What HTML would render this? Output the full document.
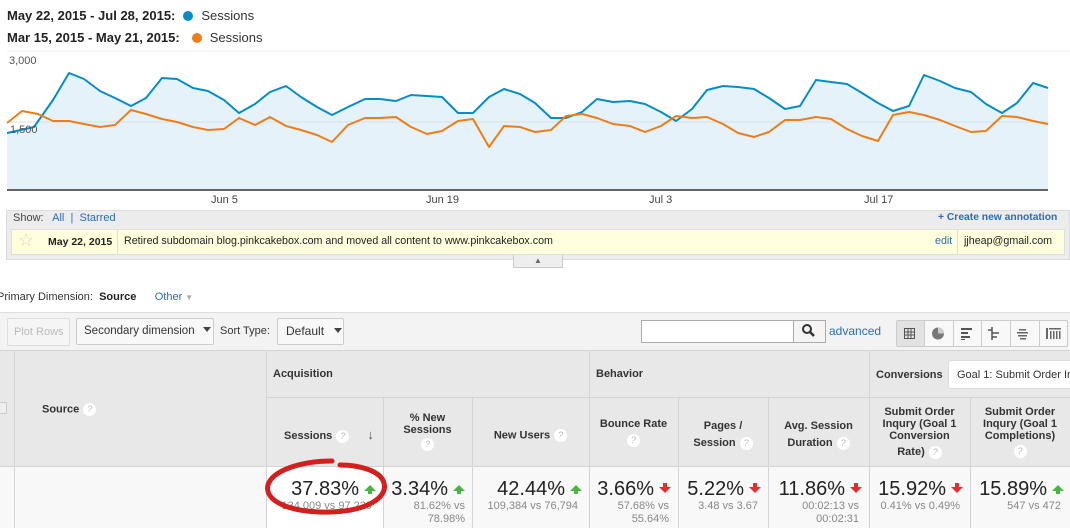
<!DOCTYPE html>
<html><head><meta charset="utf-8"><style>
*{margin:0;padding:0;box-sizing:border-box}
body{width:1070px;height:528px;overflow:hidden;background:#fff;font-family:"Liberation Sans",Arial,sans-serif;color:#222;position:relative}
.a{position:absolute;white-space:nowrap}
.lg{font-size:13px;font-weight:bold;color:#222}
.lg span{font-weight:normal;color:#333}
.dot{display:inline-block;width:10px;height:10px;border-radius:50%;margin:0 8px 0 8px;vertical-align:-1px}
.xl{font-size:11px;color:#444}
.btn{position:absolute;border:1px solid #ccc;border-radius:2px;background:#f8f8f8;font-size:12px;color:#333;padding-left:8px;line-height:25px;white-space:nowrap}
.caret{display:inline-block;border-left:4px solid transparent;border-right:4px solid transparent;border-top:5px solid #444;vertical-align:2px;margin-left:10px}
.vl{position:absolute;width:1px;background:#d4d4d4}
.hh{position:absolute;font-size:11px;font-weight:bold;color:#333;text-align:center;line-height:12px}
.q{display:inline-block;width:13px;height:13px;border-radius:50%;background:#fff;color:#bbb;font-size:9px;line-height:13px;text-align:center;font-weight:normal;vertical-align:middle;margin-left:4px}
.big{position:absolute;font-size:20px;color:#222;text-align:right}
.sm{position:absolute;font-size:11px;color:#888;text-align:right;line-height:13px}
.up{display:inline-block;width:0;height:0;border-left:6px solid transparent;border-right:6px solid transparent;border-bottom:6px solid #4ab344;position:relative;margin-left:5px;vertical-align:4px}
.up:after{content:"";position:absolute;left:-2px;top:5px;width:4px;height:4px;background:#4ab344}
.dn{display:inline-block;width:0;height:0;border-left:6px solid transparent;border-right:6px solid transparent;border-top:6px solid #e52d2d;position:relative;margin-left:5px;vertical-align:2px}
.dn:after{content:"";position:absolute;left:-2px;top:-10px;width:4px;height:5px;background:#e52d2d}
</style></head><body>

<div class="a lg" style="left:7px;top:8px">May 22, 2015 - Jul 28, 2015:<i class="dot" style="background:#058dc7"></i><span>Sessions</span></div>
<div class="a lg" style="left:7px;top:30px">Mar 15, 2015 - May 21, 2015:<i class="dot" style="background:#ed7e17;margin-left:12px"></i><span>Sessions</span></div>

<svg class="a" style="left:0;top:0" width="1070" height="210">
<line x1="7" y1="51" x2="1070" y2="51" stroke="#eee"/>
<polygon fill="#e6f2f9" points="7,190 7,133 34,127 53,100 69,73 84,79 100,91 115,98 131,106 146,98 162,78 177,79 193,88 208,91 224,100 239,113 255,104 270,92 286,86 301,97 317,107 332,115 348,107 365,99 380,99 396,101 411,95 427,96 442,97 458,113 473,113 489,97 504,89 520,94 535,103 551,118 566,118 582,112 597,99 613,102 630,101 645,104 661,112 676,121 692,109 707,90 723,86 738,87 754,89 769,98 785,109 800,106 816,80 831,82 847,84 862,93 878,103 893,111 909,106 924,75 940,81 955,88 971,92 986,104 1002,113 1017,103 1033,83 1048,88 1048,190"/>
<line x1="7" y1="122" x2="1048" y2="122" stroke="#d8e2e6"/>
<polyline fill="none" stroke="#058dc7" stroke-width="2" stroke-linejoin="round" points="7,133 34,127 53,100 69,73 84,79 100,91 115,98 131,106 146,98 162,78 177,79 193,88 208,91 224,100 239,113 255,104 270,92 286,86 301,97 317,107 332,115 348,107 365,99 380,99 396,101 411,95 427,96 442,97 458,113 473,113 489,97 504,89 520,94 535,103 551,118 566,118 582,112 597,99 613,102 630,101 645,104 661,112 676,121 692,109 707,90 723,86 738,87 754,89 769,98 785,109 800,106 816,80 831,82 847,84 862,93 878,103 893,111 909,106 924,75 940,81 955,88 971,92 986,104 1002,113 1017,103 1033,83 1048,88"/>
<polyline fill="none" stroke="#ed7e17" stroke-width="2" stroke-linejoin="round" points="7,123 22,111 38,114 53,121 69,121 84,124 100,127 115,125 131,110 146,114 162,119 177,122 193,127 208,130 224,129 239,118 255,125 270,117 286,126 301,130 317,135 332,142 348,125 365,118 380,118 396,117 411,127 427,134 442,131 458,121 473,119 489,147 504,126 520,127 535,132 551,130 566,116 582,114 597,118 613,124 630,126 645,132 661,126 676,116 692,118 707,117 723,124 738,133 754,137 769,132 785,120 800,120 816,117 831,119 847,129 862,136 878,141 893,115 909,112 924,115 940,120 955,126 971,132 986,131 1002,116 1017,117 1033,121 1048,124"/>
<line x1="7" y1="190" x2="1048" y2="190" stroke="#333" stroke-width="1.5"/>
<text x="9" y="64" font-size="11" fill="#555" font-family="Liberation Sans">3,000</text>
<text x="10" y="133" font-size="11" fill="#555" font-family="Liberation Sans">1,500</text>
</svg>
<div class="a xl" style="left:211px;top:194px">Jun 5</div>
<div class="a xl" style="left:426px;top:194px">Jun 19</div>
<div class="a xl" style="left:649px;top:194px">Jul 3</div>
<div class="a xl" style="left:864px;top:194px">Jul 17</div>

<!-- annotation -->
<div class="a" style="left:6px;top:210px;width:1064px;height:50px;background:#ececec;border:1px solid #ddd"></div>
<div class="a" style="left:13px;top:212px;font-size:11px;color:#444">Show:&nbsp;&nbsp; <span style="color:#2a6db8">All</span> &nbsp;<span style="color:#2a6db8">|</span>&nbsp; <span style="color:#2a6db8">Starred</span></div>
<div class="a" style="left:938px;top:212px;font-size:10.3px;font-weight:bold;color:#2a6db8">+ Create new annotation</div>
<div class="a" style="left:11px;top:229px;width:1054px;height:26px;background:#ffffdf;border:1px solid #ddd"></div>
<div class="a" style="left:18px;top:230px;font-size:18px;color:#d8d8b0">☆</div>
<div class="a" style="left:48px;top:236px;font-size:10.5px;font-weight:bold">May 22, 2015</div>
<div class="vl" style="left:117px;top:230px;height:24px;background:#ddd"></div>
<div class="a" style="left:124px;top:235px;font-size:10.7px;color:#222">Retired subdomain blog.pinkcakebox.com and moved all content to www.pinkcakebox.com</div>
<div class="a" style="left:935px;top:235px;font-size:10.7px;color:#2a6db8">edit</div>
<div class="vl" style="left:957px;top:230px;height:24px;background:#ddd"></div>
<div class="a" style="left:964px;top:235px;font-size:10.7px;color:#222">jjheap@gmail.com</div>
<div class="a" style="left:513px;top:255px;width:50px;height:13px;background:#eee;border:1px solid #ccc;border-top:none;font-size:8px;text-align:center;color:#666;line-height:12px">▲</div>

<div class="a" style="left:-3px;top:291px;font-size:11px;color:#333">Primary Dimension:&nbsp; <b style="color:#222">Source</b>&nbsp;&nbsp;&nbsp;&nbsp;&nbsp; <span style="color:#2a6db8">Other</span> <span style="color:#aaa;font-size:8px">▼</span></div>

<!-- toolbar -->
<div class="a" style="left:0;top:312px;width:1070px;height:38px;background:#f3f3f3;border-top:1px solid #ddd"></div>
<div class="btn" style="left:7px;top:318px;width:63px;height:28px;color:#bbb;line-height:26px;background:#f5f5f5;border-color:#ddd;font-size:11px;padding-left:6px">Plot Rows</div>
<div class="btn" style="left:76px;top:318px;width:138px;height:27px;font-size:11.5px;padding-left:7px">Secondary dimension<i class="caret" style="margin-left:8px"></i></div>
<div class="a" style="left:220px;top:325px;font-size:11px;color:#333">Sort Type:</div>
<div class="btn" style="left:277px;top:318px;width:67px;height:27px">Default<i class="caret"></i></div>
<div class="a" style="left:641px;top:320px;width:153px;height:23px;background:#fff;border:1px solid #aaa"></div>
<div class="a" style="left:793px;top:320px;width:33px;height:23px;background:#f4f4f4;border:1px solid #aaa"></div>
<svg class="a" style="left:801px;top:323px" width="16" height="16"><circle cx="6" cy="6" r="4" stroke="#333" stroke-width="2" fill="none"/><line x1="9" y1="9" x2="13" y2="13" stroke="#333" stroke-width="2.5"/></svg>
<div class="a" style="left:829px;top:324px;font-size:12px;color:#2a6db8">advanced</div>
<div class="a" style="left:896px;top:320px;width:172px;height:27px;border:1px solid #ccc;background:#f8f8f8;border-radius:2px"></div>
<div class="a" style="left:897px;top:321px;width:27px;height:25px;background:#e2e2e2"></div>
<svg class="a" style="left:896px;top:320px" width="172" height="27">
<g stroke="#ccc"><line x1="28.5" y1="0" x2="28.5" y2="27"/><line x1="57.5" y1="0" x2="57.5" y2="27"/><line x1="85.5" y1="0" x2="85.5" y2="27"/><line x1="114.5" y1="0" x2="114.5" y2="27"/><line x1="143.5" y1="0" x2="143.5" y2="27"/></g>
<g stroke="#555" fill="none"><rect x="8.5" y="8.5" width="10" height="10"/><line x1="8" y1="12" x2="19" y2="12"/><line x1="8" y1="15" x2="19" y2="15"/><line x1="12" y1="8" x2="12" y2="19"/><line x1="15" y1="8" x2="15" y2="19"/></g>
<circle cx="42" cy="13.5" r="6" fill="#777"/><path d="M42 13.5V7.5A6 6 0 0 1 48 13.5Z" fill="#ccc"/>
<g fill="#555"><rect x="65" y="8" width="11" height="2"/><rect x="65" y="12" width="7" height="2"/><rect x="65" y="16" width="9" height="2"/><rect x="65" y="19" width="4" height="1"/></g>
<g stroke="#555" stroke-width="1.5" fill="none"><path d="M96 7v13M92 10h4M96 13h7M96 17h5"/></g>
<g fill="#666"><rect x="123" y="9" width="7" height="1.5"/><rect x="121" y="12" width="11" height="1.5"/><rect x="122" y="15" width="9" height="1.5"/><rect x="124" y="18" width="6" height="1.5"/></g>
<g fill="#666"><rect x="150" y="8" width="2" height="11"/><rect x="153" y="8" width="12" height="1.5"/><rect x="154" y="11" width="1.5" height="8"/><rect x="157" y="11" width="1.5" height="8"/><rect x="160" y="11" width="1.5" height="8"/><rect x="163" y="11" width="1.5" height="8"/></g>
</svg>

<!-- table header -->
<div class="a" style="left:0;top:350px;width:1070px;height:117px;background:#e8e8e8;border-top:1px solid #d4d4d4;border-bottom:1px solid #d4d4d4"></div>
<div class="a" style="left:0;top:467px;width:1070px;height:61px;background:#f8f8f8"></div>
<div class="a" style="left:266px;top:467px;width:117px;height:61px;background:#fff"></div>
<div class="a" style="left:266px;top:397px;width:804px;height:1px;background:#d4d4d4"></div>
<div class="vl" style="left:14px;top:350px;height:178px"></div>
<div class="vl" style="left:266px;top:350px;height:178px"></div>
<div class="vl" style="left:383px;top:397px;height:131px"></div>
<div class="vl" style="left:472px;top:397px;height:131px"></div>
<div class="vl" style="left:589px;top:350px;height:178px"></div>
<div class="vl" style="left:678px;top:397px;height:131px"></div>
<div class="vl" style="left:768px;top:397px;height:131px"></div>
<div class="vl" style="left:869px;top:350px;height:178px"></div>
<div class="vl" style="left:970px;top:397px;height:131px"></div>
<div class="a" style="left:0;top:402px;width:7px;height:12px;border:1px solid #ccc;border-left:none;background:#eee"></div>

<div class="hh" style="left:42px;top:403px">Source<i class="q">?</i></div>
<div class="hh" style="left:273px;top:368px">Acquisition</div>
<div class="hh" style="left:596px;top:368px">Behavior</div>
<div class="hh" style="left:876px;top:369px">Conversions</div>
<div class="a" style="left:948px;top:360px;width:130px;height:29px;background:#fff;border:1px solid #ddd;border-radius:3px;font-size:11px;color:#333;padding:8px 0 0 8px">Goal 1: Submit Order Inquiry</div>

<div class="hh" style="left:284px;top:429px">Sessions<i class="q">?</i><span style="margin-left:18px;font-size:13px;color:#555">↓</span></div>
<div class="hh" style="left:383px;top:412px;width:89px">% New<br>Sessions<br><i class="q" style="margin:2px 0 0">?</i></div>
<div class="hh" style="left:472px;top:429px;width:117px">New Users<i class="q">?</i></div>
<div class="hh" style="left:589px;top:418px;width:89px">Bounce Rate<br><i class="q" style="margin:4px 0 0">?</i></div>
<div class="hh" style="left:678px;top:418px;width:90px;line-height:17px">Pages /<br>Session<i class="q">?</i></div>
<div class="hh" style="left:768px;top:418px;width:101px;line-height:17px">Avg. Session<br>Duration<i class="q">?</i></div>
<div class="hh" style="left:869px;top:406px;width:101px">Submit Order<br>Inqury (Goal 1<br>Conversion<br><span style="line-height:20px">Rate)</span><i class="q">?</i></div>
<div class="hh" style="left:970px;top:406px;width:100px">Submit Order<br>Inqury (Goal 1<br>Completions)<br><i class="q" style="margin:3px 0 0">?</i></div>

<!-- data -->
<div class="big" style="left:266px;top:478px;width:110px">37.83%<i class="up"></i></div>
<div class="sm" style="left:266px;top:500px;width:106px">134,009 vs 97,229</div>
<div class="big" style="left:383px;top:478px;width:82px">3.34%<i class="up"></i></div>
<div class="sm" style="left:383px;top:500px;width:82px">81.62% vs<br>78.98%</div>
<div class="big" style="left:472px;top:478px;width:110px">42.44%<i class="up"></i></div>
<div class="sm" style="left:472px;top:500px;width:106px">109,384 vs 76,794</div>
<div class="big" style="left:589px;top:478px;width:82px">3.66%<i class="dn"></i></div>
<div class="sm" style="left:589px;top:500px;width:80px">57.68% vs<br>55.64%</div>
<div class="big" style="left:678px;top:478px;width:83px">5.22%<i class="dn"></i></div>
<div class="sm" style="left:678px;top:500px;width:80px">3.48 vs 3.67</div>
<div class="big" style="left:768px;top:478px;width:94px">11.86%<i class="dn"></i></div>
<div class="sm" style="left:768px;top:500px;width:91px">00:02:13 vs<br>00:02:31</div>
<div class="big" style="left:869px;top:478px;width:94px">15.92%<i class="dn"></i></div>
<div class="sm" style="left:869px;top:500px;width:91px">0.41% vs 0.49%</div>
<div class="big" style="left:970px;top:478px;width:94px">15.89%<i class="up"></i></div>
<div class="sm" style="left:970px;top:500px;width:91px">547 vs 472</div>

<svg class="a" style="left:260px;top:455px" width="140" height="73">
<path d="M72 6C40 6 12 16 8 30C4 46 30 58 70 57C108 56 128 42 124 28C121 16 100 10 80 10" fill="none" stroke="#d41f1f" stroke-width="5" stroke-linecap="round"/>
</svg>
</body></html>
